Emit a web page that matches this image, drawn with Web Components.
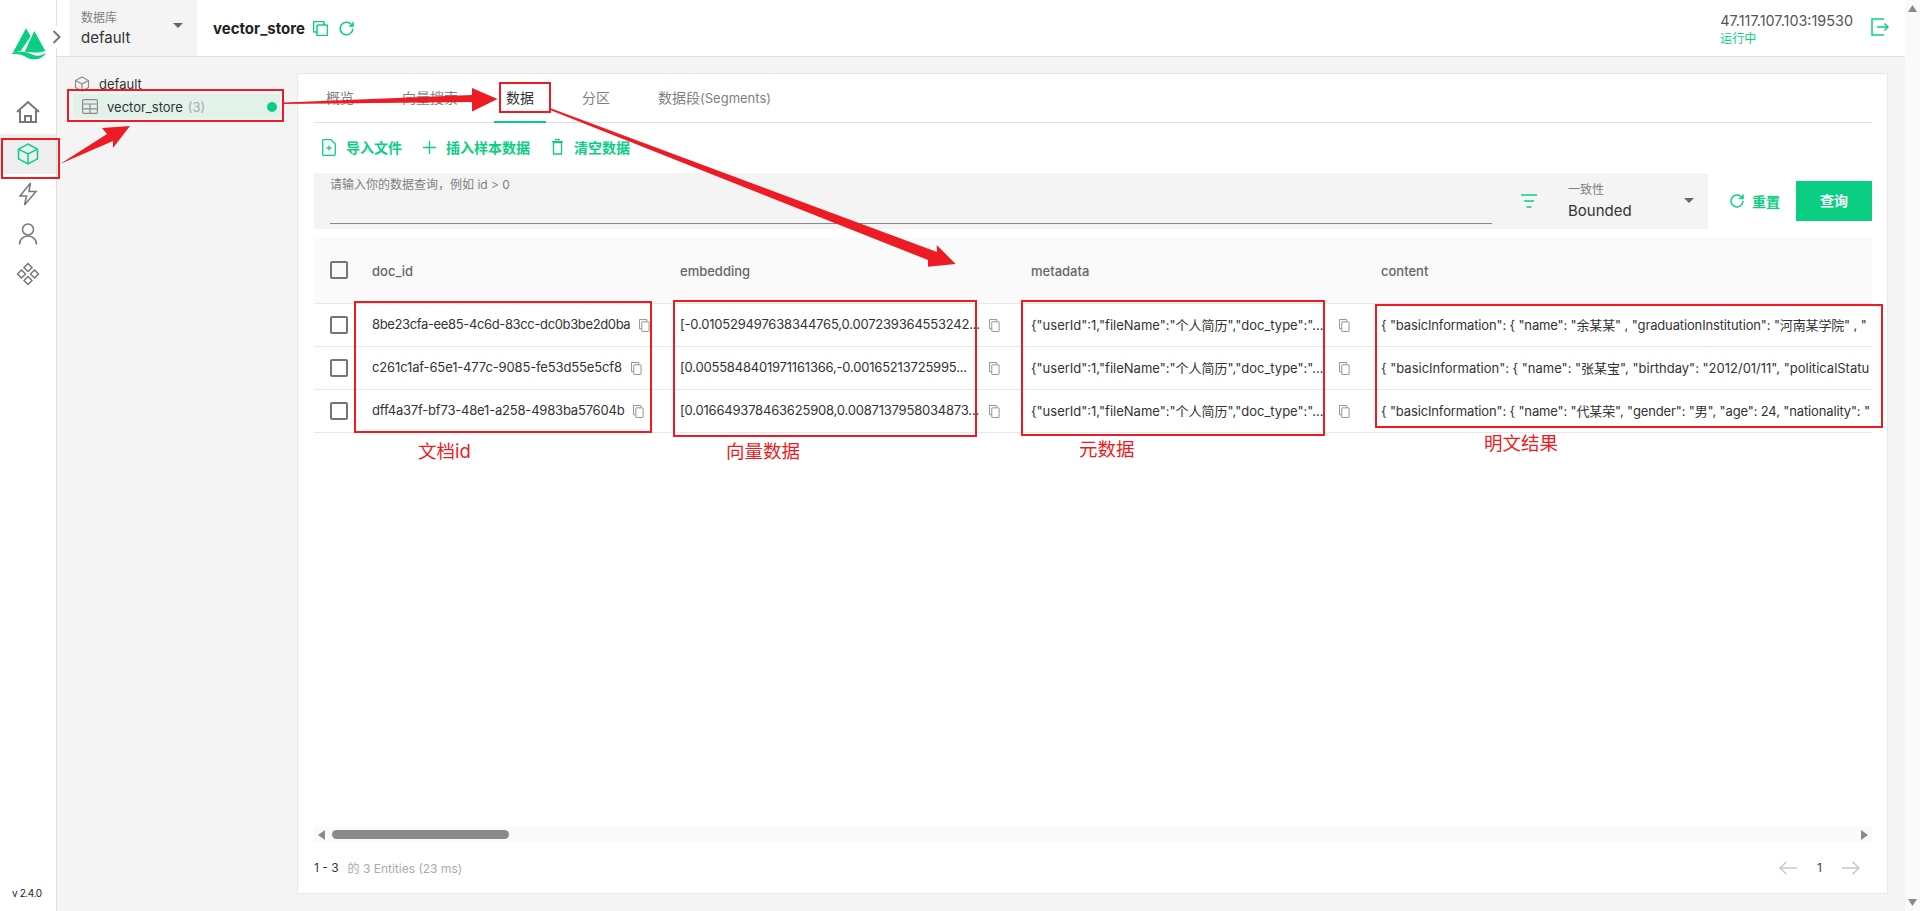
<!DOCTYPE html>
<html lang="zh">
<head>
<meta charset="utf-8">
<title>Milvus</title>
<style>
    html, body { margin: 0; height: 100%; overflow: hidden; }
    body {
        display: flex;
        position: relative;
        width: 1920px;
        height: 911px;
        background: #f4f4f4;
        color: #333;
        font: 14px Inter, "Noto Sans CJK SC", sans-serif;
    }
</style>
</head>
<body>
<side-nav></side-nav>
<main-area></main-area>
<page-scrollbar></page-scrollbar>
<red-marks></red-marks>
<script>
const GREEN = '#0acf83';

const ICONS = {
    copy: `<svg width="11" height="13" viewBox="0 0 12 14" fill="none" stroke="#8a8a8a" stroke-width="1"><path d="M8.5 2.5V.5H.5v10h2"/><rect x="3" y="3" width="8" height="10.5" rx=".5"/></svg>`,
    caret: `<svg width="10" height="5" viewBox="0 0 10 5"><path d="M0 0h10L5 5z" fill="#666"/></svg>`,
};

class SideNav extends HTMLElement {
    constructor() {
        super();
        this.attachShadow({ mode: 'open' });
        this.shadowRoot.innerHTML = `
            <style>
                :host {
                    display: flex;
                    flex-direction: column;
                    flex: none;
                    position: relative;
                    width: 56px;
                    border-right: 1px solid #e0e0e0;
                    background: #fff;
                    z-index: 2;
                }
                .logo { height: 92px; }
                .logo svg { display: block; margin: 21px 0 0 0; }
                .item { height: 40px; display: flex; align-items: center; justify-content: center; }
                .item.home { margin-bottom: 2px; }
                .item.active { background: #eeeeee; }
                .version { margin-top: auto; padding: 0 0 11px 12px; font-size: 10px; letter-spacing: -.4px; line-height: 14px; color: #222; }
                .expand {
                    position: absolute;
                    left: 50px;
                    top: 26px;
                    width: 13px;
                    height: 22px;
                    background: #fff;
                    display: flex;
                    align-items: center;
                    justify-content: center;
                }
                svg { fill: none; stroke: #77777f; stroke-width: 1.5; }
            </style>
            <div class="logo">
                <svg width="60" height="45" viewBox="0 60 180 135" style="stroke:none;fill:${GREEN}">
                    <path d="M78 82L92 106 62 150 38 156z"/>
                    <path d="M103 90L136 150C118 156 96 155 74 152z"/>
                    <path d="M30 160C50 150 75 150 95 160 110 167 125 164 138 156 128 175 100 180 82 170 65 160 50 158 30 160z"/>
                </svg>
            </div>
            <div class="expand">
                <svg width="9" height="14" viewBox="0 0 9 14" style="stroke-width:2"><path d="M1.5 1l6 6-6 6"/></svg>
            </div>
            <div class="item home">
                <svg width="26" height="24" viewBox="0 0 26 24" style="stroke:#777;stroke-width:2"><path d="M2 12L13 2l11 10M5 10v12h16V10M10 22v-6h6v6"/></svg>
            </div>
            <div class="item active">
                <svg width="22" height="22" viewBox="0 0 22 22" style="stroke:${GREEN}"><path d="M11 1l9.500 5.200v9.600L11 21l-9.500-5.200V6.200zM1.500 6.200L11 11l9.500-4.800M11 11v10"/></svg>
            </div>
            <div class="item">
                <svg width="20" height="24" viewBox="0 0 20 24"><path d="M12.500 1L2 14h6.500L6.500 23 18 9.500h-7z"/></svg>
            </div>
            <div class="item">
                <svg width="20" height="22" viewBox="0 0 20 22"><circle cx="10" cy="6.500" r="5.500"/><path d="M1.500 21.500c0-5 3.500-8.500 8.500-8.500s8.500 3.500 8.500 8.500"/></svg>
            </div>
            <div class="item">
                <svg width="24" height="24" viewBox="0 0 24 24"><path d="M12 1.500l4 4-4 4-4-4zM5.500 8l4 4-4 4-4-4zM18.500 8l4 4-4 4-4-4zM12 14.500l4 4-4 4-4-4z"/></svg>
            </div>
            <div class="version">v 2.4.0</div>
        `;
    }
}

class MainArea extends HTMLElement {
    constructor() {
        super();
        this.attachShadow({ mode: 'open' });
        this.shadowRoot.innerHTML = `
            <style>
                :host { display: flex; flex-direction: column; flex: 1; min-width: 0; }
                .content { flex: 1; display: flex; min-height: 0; padding: 16px 17px 17px 0; }
            </style>
            <top-bar></top-bar>
            <div class="content">
                <db-tree></db-tree>
                <data-card></data-card>
            </div>
        `;
    }
}

class TopBar extends HTMLElement {
    constructor() {
        super();
        this.attachShadow({ mode: 'open' });
        this.shadowRoot.innerHTML = `
            <style>
                :host {
                    display: flex;
                    align-items: center;
                    flex: none;
                    height: 56px;
                    padding-left: 12px;
                    background: #fff;
                    border-bottom: 1px solid #e0e0e0;
                }
                .db {
                    width: 128px;
                    height: 56px;
                    box-sizing: border-box;
                    padding: 9px 14px 0 12px;
                    background: #f4f4f4;
                    display: grid;
                    grid-template-columns: 1fr auto;
                    grid-template-rows: 17px 23px;
                }
                .db small { font-size: 12px; line-height: 17px; color: #7f7f7f; }
                .db b { font-weight: 400; font-size: 15px; line-height: 23px; color: #333; grid-row: 2; }
                .db svg { grid-column: 2; grid-row: 1 / 3; align-self: center; margin-top: -7px; }
                .title { margin-left: 16px; font-weight: 700; font-size: 15px; color: #1f1f1f; }
                .actions { display: flex; gap: 11px; margin-left: 8px; }
                .actions svg { display: block; fill: none; stroke: ${GREEN}; stroke-width: 1.500; }
                .status { margin-left: auto; margin-right: 18px; padding-top: 3px; line-height: 18px; }
                .addr { font-size: 14.4px; color: #555; }
                .run { font-size: 12px; color: ${GREEN}; }
                .logout { margin: 0 16px 3px 0; display: block; fill: none; stroke: ${GREEN}; stroke-width: 1.500; }
            </style>
            <div class="db">
                <small>数据库</small>
                <b>default</b>
                ${ICONS.caret}
            </div>
            <div class="title">vector_store</div>
            <div class="actions">
                <svg width="15" height="15" viewBox="0 0 15 15"><path d="M4 11H1.500a1 1 0 0 1-1-1V1.500a1 1 0 0 1 1-1H10a1 1 0 0 1 1 1V4"/><rect x="4" y="4" width="10.500" height="10.500" rx="1"/></svg>
                <svg width="15" height="15" viewBox="0 0 15 15"><path d="M13.800 7.500a6.300 6.300 0 1 1-1.800-4.400L14 5M14 1v4h-4"/></svg>
            </div>
            <div class="status">
                <div class="addr">47.117.107.103:19530</div>
                <div class="run">运行中</div>
            </div>
            <svg class="logout" width="18" height="18" viewBox="0 0 18 18"><path d="M13 1H1v16h12M6 9h11M13.500 5.500L17 9l-3.500 3.500"/></svg>
        `;
    }
}

class DbTree extends HTMLElement {
    constructor() {
        super();
        this.attachShadow({ mode: 'open' });
        this.shadowRoot.innerHTML = `
            <style>
                :host { display: block; flex: none; width: 240px; font-size: 13px; color: #333; }
                svg { display: block; flex: none; fill: none; stroke: #8c8c8c; stroke-width: 1.200; }
                .root { display: flex; align-items: center; height: 20px; padding-left: 17px; gap: 9px; }
                .col {
                    display: flex;
                    align-items: center;
                    height: 24px;
                    margin-left: 16px;
                    width: 207px;
                    padding: 1px 3px 0 9px;
                    box-sizing: border-box;
                    background: #e3f1eb;
                }
                .col svg { margin-right: 9px; }
                .col i { font-style: normal; color: #aaa; margin-left: 5px; }
                .dot { margin-left: auto; margin-right: 0; width: 10px; height: 10px; border-radius: 50%; background: ${GREEN}; }
            </style>
            <div class="root" style="margin-top:1px">
                <svg width="16" height="16" viewBox="0 0 16 16"><path d="M8 1l6.500 3.500v7L8 15l-6.500-3.500v-7zM1.500 4.500L8 8l6.500-3.500M8 8v7"/></svg>
                <span>default</span>
            </div>
            <div class="col">
                <svg width="16" height="15" viewBox="0 0 16 15"><rect x=".6" y=".6" width="14.800" height="13.800" rx="1"/><path d="M.6 5h14.800M.6 9.800h14.800M8 5v9.400"/></svg>
                <span>vector_store</span><i>(3)</i>
                <span class="dot"></span>
            </div>
        `;
    }
}

class DataCard extends HTMLElement {
    constructor() {
        super();
        this.attachShadow({ mode: 'open' });
        this.shadowRoot.innerHTML = `
            <style>
                :host {
                    display: flex;
                    flex-direction: column;
                    flex: 1;
                    min-width: 0;
                    box-sizing: border-box;
                    padding: 0 15px 0 16px;
                    background: #fff;
                    border: 1px solid #e8e8e8;
                }
                .tabs { display: flex; gap: 24px; height: 48px; flex: none; border-bottom: 1px solid #e0e0e0; color: #7f7f7f; }
                .tabs span { padding: 0 12px; line-height: 48px; box-sizing: border-box; height: 49px; }
                .tabs span span { padding: 0; font-size: 13px; }
                .tabs .on { color: #333; border-bottom: 2px solid ${GREEN}; }
                .tools { display: flex; align-items: center; height: 48px; margin-bottom: 2px; flex: none; color: ${GREEN}; font-weight: 700; }
                .tools svg { display: block; fill: none; stroke: ${GREEN}; stroke-width: 1.300; }
                .tools div { display: flex; align-items: center; gap: 10px; }
                .query { display: flex; flex: none; gap: 0; align-items: center; height: 56px; margin-bottom: 8px; }
                .footer { display: flex; align-items: center; flex: 1; font-size: 12px; color: #aaa; }
                .footer b { font-weight: 400; color: #333; margin-right: 9px; }
                .pages { margin-left: auto; margin-right: 12px; display: flex; align-items: center; color: #444; gap: 20px; }
                .pages svg { display: block; fill: none; stroke: #c8c8c8; stroke-width: 1.500; }
            </style>
            <div class="tabs">
                <span>概览</span><span>向量搜索</span><span class="on">数据</span><span>分区</span><span>数据段<span>(Segments)</span></span>
            </div>
            <div class="tools">
                <div style="margin-left:8px">
                    <svg width="14" height="17" viewBox="0 0 14 17"><path d="M1.500.7h7.500l4.300 4.300v10a1.300 1.300 0 0 1-1.300 1.300H1.500A1 1 0 0 1 .7 15V2A1.300 1.300 0 0 1 1.500.7zM7 6.500v5M4.500 9h5"/></svg>
                    <span>导入文件</span>
                </div>
                <div style="margin-left:21px">
                    <svg width="13" height="13" viewBox="0 0 13 13"><path d="M6.500 0v13M0 6.500h13"/></svg>
                    <span>插入样本数据</span>
                </div>
                <div style="margin-left:22px;gap:11px">
                    <svg width="11" height="16" viewBox="0 0 11 16"><path d="M1.500 3.500h8V15h-8zM0 2.700h11M3 .7h5"/></svg>
                    <span>清空数据</span>
                </div>
            </div>
            <div class="query">
                <query-box></query-box>
                <query-actions></query-actions>
            </div>
            <data-table></data-table>
            <h-scroll></h-scroll>
            <div class="footer">
                <b>1 - 3</b><span>的 3 Entities (23 ms)</span>
                <div class="pages">
                    <svg width="18" height="14" viewBox="0 0 18 14"><path d="M18 7H1M7.500.7L1 7l6.500 6.300"/></svg>
                    <span>1</span>
                    <svg width="18" height="14" viewBox="0 0 18 14"><path d="M0 7h17M10.500.7L17 7l-6.500 6.300"/></svg>
                </div>
            </div>
        `;
    }
}

class QueryBox extends HTMLElement {
    constructor() {
        super();
        this.attachShadow({ mode: 'open' });
        this.shadowRoot.innerHTML = `
            <style>
                :host { display: flex; width: 1394px; height: 56px; background: #f4f4f4; flex: none; }
                .input { width: 1162px; margin-left: 16px; height: 51px; box-sizing: border-box; border-bottom: 1px solid #8a8a8a;
                         font-size: 12px; line-height: 17px; color: #7f7f7f; padding-top: 3px; }
                .filter { margin: 21px 0 0 29px; width: 16px; height: 14px; display: block; stroke: ${GREEN}; stroke-width: 1.500; }
                .consistency { margin-left: 31px; width: 126px; display: grid; grid-template-columns: 1fr auto; grid-template-rows: 18px 23px; padding-top: 8px; }
                .consistency small { font-size: 12px; line-height: 17px; color: #7f7f7f; }
                .consistency b { font-weight: 400; font-size: 15px; line-height: 23px; color: #333; grid-row: 2; }
                .consistency svg { grid-column: 2; grid-row: 1 / 3; align-self: center; margin-top: -3px; }
            </style>
            <div class="input">请输入你的数据查询，例如 id &gt; 0</div>
            <svg class="filter" viewBox="0 0 16 14"><path d="M0 1h16M3 7h10M5.500 13h5"/></svg>
            <div class="consistency">
                <small>一致性</small>
                <b>Bounded</b>
                ${ICONS.caret}
            </div>
        `;
    }
}

class QueryActions extends HTMLElement {
    constructor() {
        super();
        this.attachShadow({ mode: 'open' });
        this.shadowRoot.innerHTML = `
            <style>
                :host { display: flex; align-items: center; flex: 1; font-weight: 700; }
                .reset { display: flex; align-items: center; gap: 8px; margin-left: 22px; color: ${GREEN}; }
                .reset svg { display: block; fill: none; stroke: ${GREEN}; stroke-width: 1.500; }
                .go { margin-left: auto; width: 76px; height: 40px; line-height: 40px; text-align: center; background: ${GREEN}; color: #fff; }
            </style>
            <div class="reset">
                <svg width="14" height="14" viewBox="0 0 14 14"><path d="M13 7a6 6 0 1 1-1.800-4.300L13 4.500M13 .5v4H9"/></svg>
                <span>重置</span>
            </div>
            <div class="go">查询</div>
        `;
    }
}

class DataTable extends HTMLElement {
    constructor() {
        super();
        this.attachShadow({ mode: 'open' });
        // id, vector, content, then the tracking each id and content needs to sit like the shot
        this.rows = [
            ['8be23cfa-ee85-4c6d-83cc-dc0b3be2d0ba',
             '[-0.010529497638344765,0.007239364553242...',
             '{ "basicInformation": { "name": "余某某" , "graduationInstitution": "河南某学院" , "',
             -.36, -.14],
            ['c261c1af-65e1-477c-9085-fe53d55e5cf8',
             '[0.0055848401971161366,-0.00165213725995...',
             '{ "basicInformation": { "name": "张某宝", "birthday": "2012/01/11", "politicalStatu',
             -.14, 0],
            ['dff4a37f-bf73-48e1-a258-4983ba57604b',
             '[0.016649378463625908,0.0087137958034873...',
             '{ "basicInformation": { "name": "代某荣", "gender": "男", "age": 24, "nationality": "',
             -.19, -.14],
        ];
        const meta = '{"userId":1,"fileName":"个人简历","doc_type":"...';
        const copy = ICONS.copy;
        this.shadowRoot.innerHTML = `
            <style>
                :host { display: block; flex: none; height: 590px; }
                table { border-collapse: collapse; table-layout: fixed; width: 100%; font-size: 13px; color: #333; }
                th { height: 65px; padding: 1px 0 0 16px; background: #fafafa; text-align: left; font-weight: 500; color: #666; font-size: 13px; }
                td { height: 42px; padding: 0 0 0 16px; border-bottom: 1px solid #e8e8e8; white-space: nowrap; overflow: hidden; }
                tr:first-child td { border-top: 1px solid #e8e8e8; }
                .chk { padding: 0 0 0 16px; }
                .box { display: block; width: 14px; height: 14px; border: 2px solid #757575; border-radius: 2px; }
                .cell { display: flex; align-items: center; }
                .cell span { margin-top: -2px; }
                .cell svg { flex: none; display: block; }
                .doc svg { margin-left: 9px; }
                .emb span { width: 294px; flex: none; letter-spacing: -.2px; white-space: nowrap; }
                .emb svg { margin-left: 15px; }
                .meta span { width: 295px; flex: none; }
                .meta svg { margin-left: 13px; }
            </style>
            <table>
                <colgroup><col style="width:42px"><col style="width:308px"><col style="width:351px"><col style="width:350px"><col></colgroup>
                <thead><tr>
                    <th class="chk"><span class="box"></span></th>
                    <th>doc_id</th><th>embedding</th><th>metadata</th><th>content</th>
                </tr></thead>
                <tbody>
                ${this.rows.map((row) => `
                    <tr>
                        <td class="chk"><span class="box"></span></td>
                        <td><div class="cell doc"><span style="letter-spacing:${row[3]}px">${row[0]}</span>${copy}</div></td>
                        <td><div class="cell emb"><span>${row[1]}</span>${copy}</div></td>
                        <td><div class="cell meta"><span>${meta}</span>${copy}</div></td>
                        <td><div class="cell"><span style="letter-spacing:${row[4]}px">${row[2]}</span></div></td>
                    </tr>
                `).join('')}
                </tbody>
            </table>
        `;
    }
}

class HScroll extends HTMLElement {
    constructor() {
        super();
        this.attachShadow({ mode: 'open' });
        this.shadowRoot.innerHTML = `
            <style>
                :host { display: flex; align-items: center; flex: none; height: 15px; background: #fafafa; padding: 0 4px; }
                .thumb { width: 177px; height: 9px; border-radius: 5px; background: #8a8a8a; margin-left: 6px; }
                svg { display: block; fill: #8a8a8a; }
                .end { margin-left: auto; }
            </style>
            <svg width="8" height="10" viewBox="0 0 8 10"><path d="M0 5l7-5v10z"/></svg>
            <div class="thumb"></div>
            <svg class="end" width="8" height="10" viewBox="0 0 8 10"><path d="M8 5L1 0v10z"/></svg>
        `;
    }
}

class PageScrollbar extends HTMLElement {
    constructor() {
        super();
        this.attachShadow({ mode: 'open' });
        this.shadowRoot.innerHTML = `
            <style>
                :host {
                    display: flex;
                    flex-direction: column;
                    justify-content: space-between;
                    align-items: center;
                    flex: none;
                    width: 15px;
                    padding: 5px 0;
                    box-sizing: border-box;
                    background: #fafafa;
                }
                svg { display: block; fill: #8a8a8a; }
            </style>
            <svg width="9" height="7" viewBox="0 0 9 7"><path d="M4.500 0L9 7H0z"/></svg>
            <svg width="9" height="7" viewBox="0 0 9 7"><path d="M4.500 7L9 0H0z"/></svg>
        `;
    }
}

// red notes drawn on top of the shot
class RedMarks extends HTMLElement {
    constructor() {
        super();
        this.attachShadow({ mode: 'open' });
        const boxes = [
            [2, 139, 57, 39], [68, 90, 215, 31], [500, 83, 50, 29],
            [355, 302, 296, 130], [674, 301, 302, 135], [1022, 301, 302, 134], [1376, 305, 506, 122],
        ];
        const notes = [['文档id', 418, 451], ['向量数据', 726, 451], ['元数据', 1079, 449], ['明文结果', 1484, 443]];
        this.shadowRoot.innerHTML = `
            <style>
                :host { position: absolute; inset: 0; pointer-events: none; z-index: 5; }
                svg { position: absolute; left: 0; top: 0; }
                rect { fill: none; stroke: #ed1c24; stroke-width: 2; }
                polygon { fill: #ed1c24; }
                span { position: absolute; font-size: 18.500px; line-height: 24px; color: #ed1c24; transform: translateY(-12px); }
            </style>
            <svg width="1920" height="911">
                ${boxes.map((b) => `<rect x="${b[0]}" y="${b[1]}" width="${b[2]}" height="${b[3]}"/>`).join('')}
                <polygon points="60,164 107,134 102,128 130,126 113,148 113,141"/>
                <polygon points="284,102.500 472,95 472,88 497.500,99 472,111.600 472,102 284,104"/>
                <polygon points="550,108 937,252 936.700,245 955.700,264 928,266.700 928,260 550,110"/>
            </svg>
            ${notes.map((n) => `<span style="left:${n[1]}px;top:${n[2]}px">${n[0]}</span>`).join('')}
        `;
    }
}

customElements.define('side-nav', SideNav);
customElements.define('main-area', MainArea);
customElements.define('top-bar', TopBar);
customElements.define('db-tree', DbTree);
customElements.define('data-card', DataCard);
customElements.define('query-box', QueryBox);
customElements.define('query-actions', QueryActions);
customElements.define('data-table', DataTable);
customElements.define('h-scroll', HScroll);
customElements.define('page-scrollbar', PageScrollbar);
customElements.define('red-marks', RedMarks);
</script>
</body>
</html>
